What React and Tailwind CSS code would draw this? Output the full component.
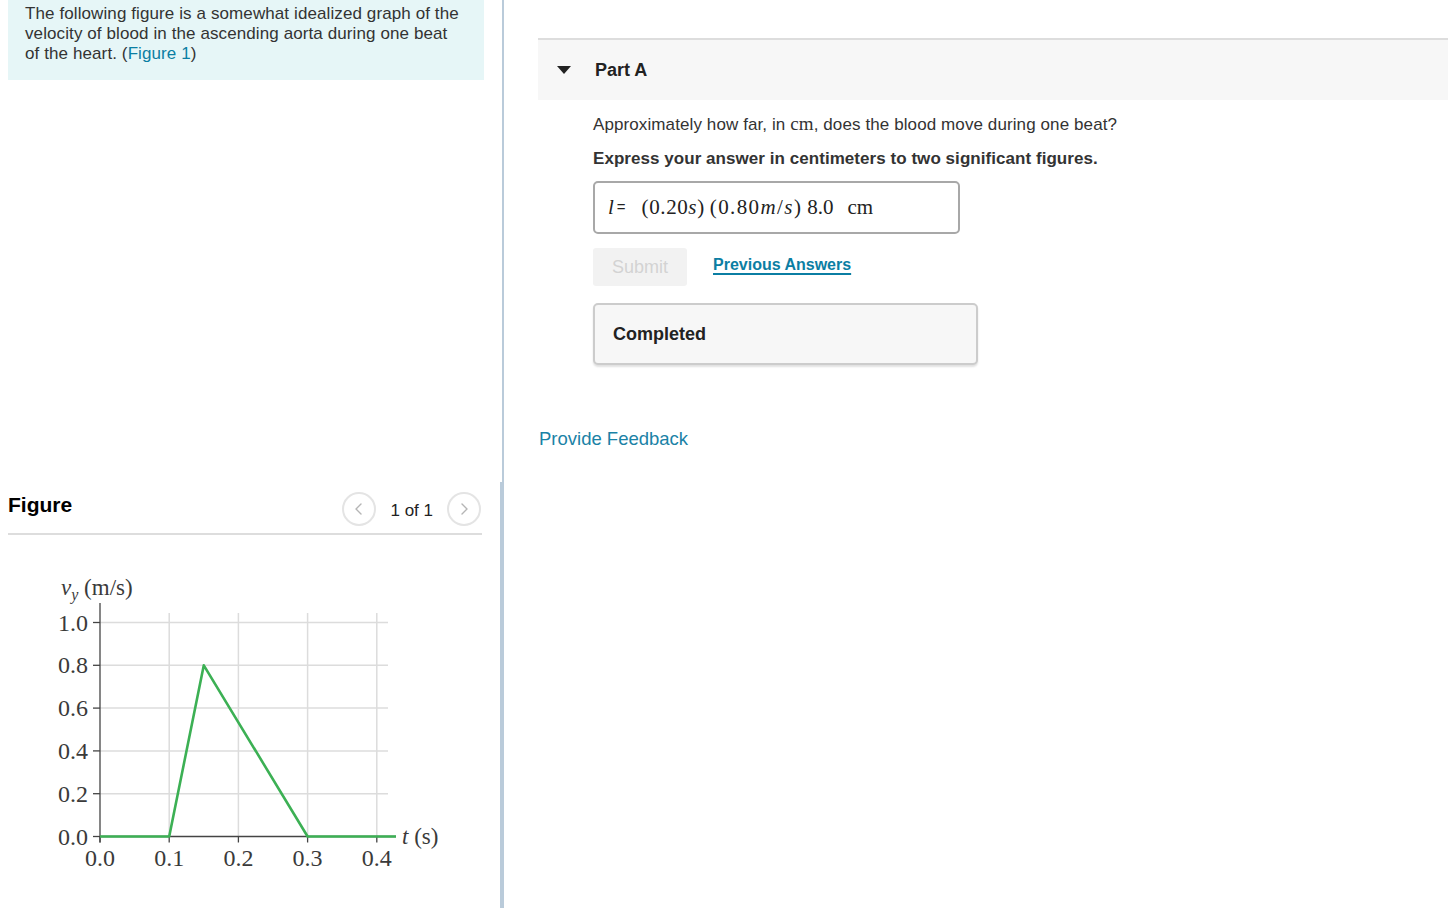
const serif = { fontFamily: '"Liberation Serif", "DejaVu Serif", serif' };

function Graph() {
  const x0 = 100;
  const dx = 69.2;
  const y0 = 836.5;
  const dy = 42.8;
  const xs = [0, 1, 2, 3, 4].map((i) => x0 + i * dx);
  const ys = [0, 1, 2, 3, 4, 5].map((i) => y0 - i * dy);
  return (
    <svg width="480" height="373" className="block">
      <g transform="translate(0,-535)" style={serif}>
        {xs.slice(1).map((x) => (
          <line key={"gx" + x} x1={x} y1={613} x2={x} y2={y0} stroke="#dcdcdc" strokeWidth="1.5" />
        ))}
        {ys.slice(1).map((y) => (
          <line key={"gy" + y} x1={x0} y1={y} x2={388} y2={y} stroke="#dcdcdc" strokeWidth="1.5" />
        ))}
        <line x1={x0} y1={603} x2={x0} y2={y0 + 6} stroke="#444" strokeWidth="1.3" />
        <line x1={x0} y1={y0} x2={396} y2={y0} stroke="#444" strokeWidth="1.3" />
        {ys.map((y) => (
          <line key={"ty" + y} x1={x0 - 7} y1={y} x2={x0} y2={y} stroke="#444" strokeWidth="1.3" />
        ))}
        {xs.map((x) => (
          <line key={"tx" + x} x1={x} y1={y0} x2={x} y2={y0 + 6} stroke="#444" strokeWidth="1.3" />
        ))}
        <polyline
          points={`${x0},${y0} ${x0 + dx},${y0} ${x0 + 1.5 * dx},${y0 - 4 * dy} ${x0 + 3 * dx},${y0} 396,${y0}`}
          fill="none"
          stroke="#3cb054"
          strokeWidth="2.6"
          strokeLinejoin="round"
        />
        {["0.0", "0.2", "0.4", "0.6", "0.8", "1.0"].map((t, i) => (
          <text key={t} x={88} y={ys[i] + 8} textAnchor="end" fontSize="24" fill="#3a3a3a">
            {t}
          </text>
        ))}
        {["0.0", "0.1", "0.2", "0.3", "0.4"].map((t, i) => (
          <text key={"x" + t} x={xs[i]} y={866} textAnchor="middle" fontSize="24" fill="#3a3a3a">
            {t}
          </text>
        ))}
        <text x={61} y={595} fontSize="23" fill="#3a3a3a">
          <tspan fontStyle="italic">v</tspan>
          <tspan fontStyle="italic" fontSize="16" dy="5">y</tspan>
          <tspan dy="-5"> (m/s)</tspan>
        </text>
        <text x={402} y={844} fontSize="23" fill="#3a3a3a">
          <tspan fontStyle="italic">t</tspan>
          <tspan> (s)</tspan>
        </text>
      </g>
    </svg>
  );
}

function PageCircle({ dir }) {
  return (
    <div className="w-[34px] h-[34px] rounded-full border-2 border-[#e4e4e4] flex items-center justify-center">
      <svg width="14" height="14" viewBox="0 0 14 14" fill="none">
        <path
          d={dir === "left" ? "M9 2 L4 7 L9 12" : "M5 2 L10 7 L5 12"}
          stroke="#b5b5b5"
          strokeWidth="1.4"
          strokeLinecap="round"
          strokeLinejoin="round"
        />
      </svg>
    </div>
  );
}

export default function App() {
  return (
    <div
      className="flex h-[908px] w-[1448px] bg-white text-[#333] overflow-hidden"
      style={{ fontFamily: '"Liberation Sans", Arial, sans-serif' }}
    >
      <div className="w-[500px] shrink-0 flex flex-col">
        <div className="ml-[8px] w-[476px] h-[80px] bg-[#e6f6f7] pl-[17px] pr-[21px] pt-[4px] text-[17px] tracking-[0.1px] leading-[20px] text-[#333]">
          The following figure is a somewhat idealized graph of the velocity of blood in the ascending aorta during one beat of the heart. (<span className="text-[#0b7ea3]">Figure 1</span>)
        </div>
        <div className="ml-[8px] w-[474px] mt-[410px] h-[45px] border-b-2 border-[#dddddd] flex items-start justify-between">
          <div className="text-[21px] leading-[24px] font-bold text-black mt-[3px]">Figure</div>
          <div className="flex items-center mt-[2px] mr-[1px]">
            <PageCircle dir="left" />
            <span className="text-[17px] text-[#222] ml-[14px] mr-[14px] mt-[4px]">1 of 1</span>
            <PageCircle dir="right" />
          </div>
        </div>
        <Graph />
      </div>

      <div className="w-[4px] shrink-0 flex flex-col">
        <div className="h-[482px] ml-[2px] w-[2px] bg-[#bacbda]" />
        <div className="flex-1 w-[4px] bg-[#bacbda]" />
      </div>

      <div className="flex-1 flex flex-col">
        <div className="ml-[34px] mt-[38px] border-t-2 border-[#dddddd] bg-[#f7f7f7] h-[62px] flex items-center">
          <svg width="14" height="9" viewBox="0 0 14 9" className="ml-[19px] mt-[1px]">
            <path d="M0 0 L14 0 L7 8 Z" fill="#222" />
          </svg>
          <span className="ml-[24px] text-[18px] font-bold text-[#222]">Part A</span>
        </div>

        <div className="ml-[89px] flex flex-col items-start">
          <p className="mt-[14px] text-[17px] tracking-[0.1px] leading-[20px] text-[#333]">
            Approximately how far, in <span className="text-[19px]" style={serif}>cm</span>, does the blood move during one beat?
          </p>
          <p className="mt-[14px] text-[17px] tracking-[0.05px] leading-[20px] font-bold text-[#333]">
            Express your answer in centimeters to two significant figures.
          </p>

          <div className="mt-[12px] w-[367px] h-[53px] border-2 border-[#a8a8a8] rounded-[5px] flex items-center pl-[13px] text-[21px] text-[#222]" style={serif}>
            <span className="italic">l</span>
            <span className="text-[15px] ml-[3px]" style={{ fontFamily: '"Liberation Sans", Arial, sans-serif' }}>=</span>
            <span className="ml-[16px] tracking-[0.6px]">(0.20<i>s</i>)</span>
            <span className="ml-[5px] tracking-[1.4px]">(0.80<i>m</i>/<i>s</i>)</span>
            <span className="ml-[5px]">8.0</span>
            <span className="ml-[14px]">cm</span>
          </div>

          <div className="mt-[14px] flex items-center">
            <div className="w-[94px] h-[38px] bg-[#f2f2f2] rounded-[3px] flex items-center justify-center text-[18px] text-[#d3d3d3]">
              Submit
            </div>
            <span className="ml-[26px] mb-[5px] text-[16px] font-bold text-[#0b7ea3] underline underline-offset-[3px] decoration-2">
              Previous Answers
            </span>
          </div>

          <div className="mt-[17px] w-[385px] h-[62px] bg-[#f7f7f7] border-2 border-[#cccccc] rounded-[5px] shadow-[0_2px_2px_rgba(0,0,0,0.12)] flex items-center pl-[18px] text-[18px] font-bold text-[#222]">
            Completed
          </div>
        </div>

        <div className="ml-[35px] mt-[62px] text-[18.5px] leading-[24px] text-[#1a82a6]">Provide Feedback</div>
      </div>
    </div>
  );
}
